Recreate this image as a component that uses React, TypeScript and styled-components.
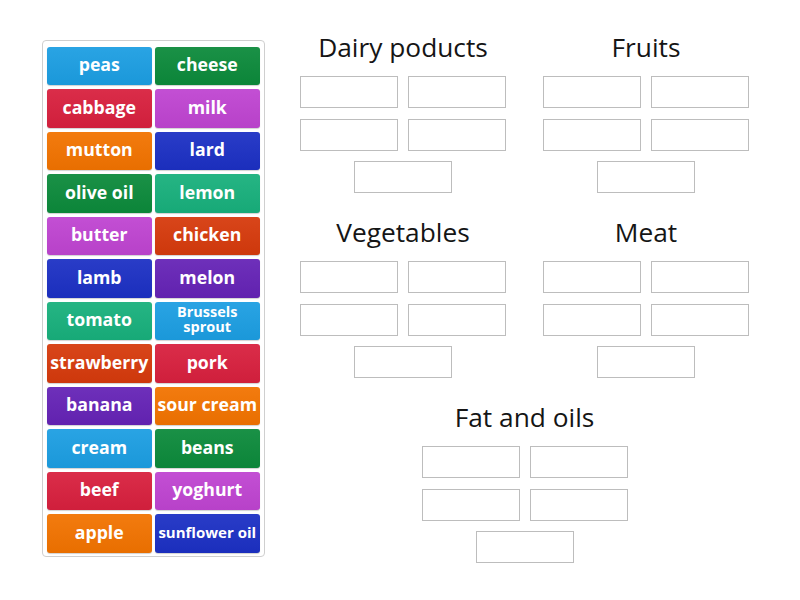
import React from "react";
import styled, { createGlobalStyle } from "styled-components";

const Global = createGlobalStyle`
  html, body { margin: 0; padding: 0; background: #ffffff; }
  body { font-family: "Open Sans", "DejaVu Sans", sans-serif; }
`;

const C = {
  sky: "#1c9ee2",
  green: "#0c8a3b",
  red: "#d8203e",
  magenta: "#bf44d1",
  orange: "#f27300",
  blue: "#1c30c4",
  teal: "#18b07c",
  rust: "#d63a0c",
  purple: "#6523b6",
};

type Item = { label: string; color: string; size?: number };

const items: Item[] = [
  { label: "peas", color: C.sky },
  { label: "cheese", color: C.green },
  { label: "cabbage", color: C.red },
  { label: "milk", color: C.magenta },
  { label: "mutton", color: C.orange },
  { label: "lard", color: C.blue },
  { label: "olive oil", color: C.green },
  { label: "lemon", color: C.teal },
  { label: "butter", color: C.magenta },
  { label: "chicken", color: C.rust },
  { label: "lamb", color: C.blue },
  { label: "melon", color: C.purple },
  { label: "tomato", color: C.teal },
  { label: "Brussels sprout", color: C.sky, size: 14.5 },
  { label: "strawberry", color: C.rust },
  { label: "pork", color: C.red },
  { label: "banana", color: C.purple },
  { label: "sour cream", color: C.orange },
  { label: "cream", color: C.sky },
  { label: "beans", color: C.green },
  { label: "beef", color: C.red },
  { label: "yoghurt", color: C.magenta },
  { label: "apple", color: C.orange },
  { label: "sunflower oil", color: C.blue, size: 15 },
];

const Page = styled.div`
  display: flex;
  align-items: flex-start;
  gap: 35px;
  padding: 40px 0 0 42px;
`;

const Bank = styled.div`
  display: grid;
  grid-template-columns: 104.5px 104.5px;
  grid-auto-rows: 38.5px;
  gap: 4px 3.5px;
  padding: 5.5px 4px 3.5px 4px;
  border: 1px solid #cfcfcf;
  border-radius: 4px;
  background: #fff;
`;

const Tile = styled.div<{ $bg: string; $size: number }>`
  display: flex;
  align-items: center;
  justify-content: center;
  text-align: center;
  box-sizing: border-box;
  background: ${(p) => p.$bg};
  background-image: linear-gradient(rgba(255, 255, 255, 0.06), rgba(0, 0, 0, 0.04));
  border-radius: 3px;
  box-shadow: 0 1px 1px rgba(0, 0, 0, 0.18);
  color: #fff;
  font-weight: 700;
  font-size: ${(p) => p.$size}px;
  line-height: ${(p) => (p.$size < 16 ? 1 : 1.2)};
  white-space: ${(p) => (p.$size < 16 ? "normal" : "nowrap")};
  padding: 0 1px 2px;
`;

const Board = styled.div`
  display: grid;
  grid-template-columns: 207px 207px;
  column-gap: 36px;
  row-gap: 23px;
  margin-top: -9px;
`;

const Group = styled.div<{ $span?: boolean }>`
  display: flex;
  flex-direction: column;
  align-items: center;
  ${(p) => (p.$span ? "grid-column: 1 / span 2; justify-self: center; width: 207px;" : "")}
`;

const Heading = styled.div`
  box-sizing: border-box;
  font-size: 26.3px;
  line-height: 32px;
  height: 34px;
  padding-bottom: 2px;
  color: #151515;
  margin-bottom: 11px;
  white-space: nowrap;
`;

const Slots = styled.div`
  display: grid;
  grid-template-columns: 98px 98px;
  grid-auto-rows: 32px;
  gap: 10.5px 10px;
  justify-items: center;
`;

const Slot = styled.div<{ $wide?: boolean }>`
  width: 98px;
  box-sizing: border-box;
  border: 1px solid #bdbdbd;
  background: #fff;
  ${(p) => (p.$wide ? "grid-column: 1 / span 2;" : "")}
`;

const groups = ["Dairy poducts", "Fruits", "Vegetables", "Meat", "Fat and oils"];

export default function App() {
  return (
    <>
      <Global />
      <Page>
        <Bank>
          {items.map((it) => (
            <Tile key={it.label} $bg={it.color} $size={it.size ?? 17.7}>
              {it.label}
            </Tile>
          ))}
        </Bank>
        <Board>
          {groups.map((g, i) => (
            <Group key={g} $span={i === 4}>
              <Heading>{g}</Heading>
              <Slots>
                <Slot />
                <Slot />
                <Slot />
                <Slot />
                <Slot $wide />
              </Slots>
            </Group>
          ))}
        </Board>
      </Page>
    </>
  );
}
